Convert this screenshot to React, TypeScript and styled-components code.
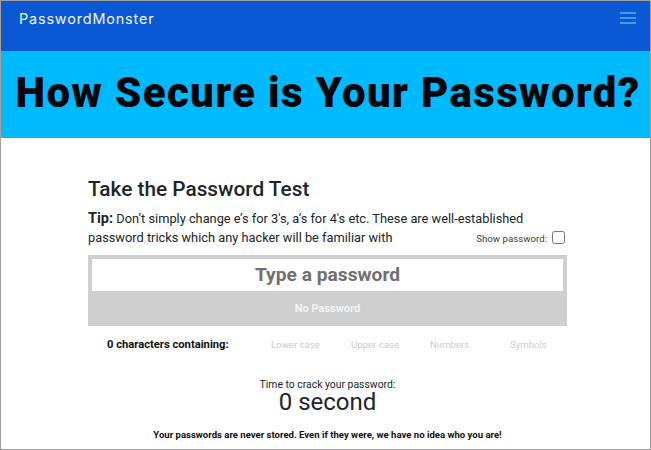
import React from "react";
import styled, { createGlobalStyle } from "styled-components";

const Global = createGlobalStyle`
  html, body { margin: 0; padding: 0; background: #fff; }
  * { box-sizing: border-box; }
  body { font-family: Roboto, "Liberation Sans", sans-serif; }
`;

const Frame = styled.div`
  width: 651px;
  height: 450px;
  border: 1px solid #a0a0a0;
  overflow: hidden;
  display: flex;
  flex-direction: column;
  background: #fff;
`;

const TopBar = styled.header`
  height: 50px;
  flex: none;
  background: #0a58d3;
  display: flex;
  justify-content: space-between;
  align-items: flex-start;
  padding: 9px 14px 0 18px;
`;

const Logo = styled.div`
  font-family: Inter, Roboto, sans-serif;
  font-size: 14.4px;
  font-weight: 400;
  line-height: 18px;
  letter-spacing: 0.85px;
  color: #f2f6ff;
`;

const Burger = styled.div`
  margin-top: 2px;
  width: 16px;
  height: 12px;
  display: flex;
  flex-direction: column;
  justify-content: space-between;
`;

const BurgerLine = styled.span`
  display: block;
  height: 2px;
  background: #3f9bf8;
`;

const Hero = styled.section`
  height: 87px;
  flex: none;
  background: #00baff;
  display: flex;
  align-items: center;
  justify-content: center;
  padding: 0 0 4px 5px;
`;

const HeroTitle = styled.h1`
  margin: 0;
  font-family: Roboto, sans-serif;
  font-size: 42px;
  line-height: 50px;
  font-weight: 900;
  letter-spacing: 1.35px;
  color: #04060a;
  white-space: nowrap;
`;

const Content = styled.main`
  flex: 1;
  width: 479px;
  margin-left: 87px;
  display: flex;
  flex-direction: column;
  padding-top: 38px;
`;

const Heading = styled.h2`
  margin: 0;
  font-size: 20.8px;
  line-height: 26px;
  font-weight: 500;
  color: #212529;
`;

const TipRow = styled.div`
  position: relative;
  margin-top: 7px;
  font-size: 12.8px;
  line-height: 19px;
  color: #212529;
  height: 38px;
`;

const TipLabel = styled.strong`
  font-weight: 700;
  font-size: 14.5px;
`;

const ShowPassword = styled.label`
  position: absolute;
  right: 2px;
  bottom: 0;
  display: flex;
  align-items: center;
  gap: 5px;
  font-size: 9.7px;
  line-height: 14px;
  color: #3c4043;
`;

const Check = styled.span`
  width: 13px;
  height: 13px;
  margin-bottom: 3px;
  border: 1px solid #767676;
  border-radius: 2.5px;
  background: #fff;
`;

const Meter = styled.div`
  margin-top: 8px;
  background: #cfcfcf;
  padding: 4px;
  height: 71px;
`;

const PasswordField = styled.div`
  height: 32px;
  background: #fff;
  text-align: center;
  font-size: 19.2px;
  line-height: 32px;
  font-weight: 700;
  color: #6f6f6f;
`;

const Strength = styled.div`
  height: 35px;
  text-align: center;
  font-size: 11px;
  line-height: 36px;
  font-weight: 700;
  color: #f4f4f4;
`;

const Counts = styled.div`
  display: grid;
  grid-template-columns: 183px 80px 79px 80px 57px;
  margin-top: 11px;
  height: 16px;
  align-items: center;
`;

const CountLabel = styled.div`
  padding-left: 19px;
  font-size: 11.2px;
  line-height: 16px;
  font-weight: 700;
  color: #111;
  white-space: nowrap;
`;

const CountItem = styled.div`
  font-size: 9.6px;
  line-height: 16px;
  color: #cdcdcd;
  white-space: nowrap;
`;

const Crack = styled.div`
  margin-top: 25px;
  text-align: center;
  color: #212529;
`;

const CrackLabel = styled.div`
  font-size: 10.4px;
  line-height: 14px;
`;

const CrackValue = styled.div`
  font-size: 24px;
  line-height: 21px;
`;

const Note = styled.p`
  margin: 15px 0 0;
  text-align: center;
  font-size: 9.56px;
  line-height: 14px;
  font-weight: 700;
  color: #111;
`;

export default function App() {
  return (
    <>
      <Global />
      <Frame>
        <TopBar>
          <Logo>PasswordMonster</Logo>
          <Burger>
            <BurgerLine />
            <BurgerLine />
            <BurgerLine />
          </Burger>
        </TopBar>
        <Hero>
          <HeroTitle>How Secure is Your Password?</HeroTitle>
        </Hero>
        <Content>
          <Heading>Take the Password Test</Heading>
          <TipRow>
            <TipLabel>Tip:</TipLabel> Don’t simply change e’s for 3's, a’s for 4's etc. These are well-established
            <br />
            password tricks which any hacker will be familiar with
            <ShowPassword>
              Show password:
              <Check />
            </ShowPassword>
          </TipRow>
          <Meter>
            <PasswordField>Type a password</PasswordField>
            <Strength>No Password</Strength>
          </Meter>
          <Counts>
            <CountLabel>0 characters containing:</CountLabel>
            <CountItem>Lower case</CountItem>
            <CountItem>Upper case</CountItem>
            <CountItem>Numbers</CountItem>
            <CountItem>Symbols</CountItem>
          </Counts>
          <Crack>
            <CrackLabel>Time to crack your password:</CrackLabel>
            <CrackValue>0 second</CrackValue>
          </Crack>
          <Note>Your passwords are never stored. Even if they were, we have no idea who you are!</Note>
        </Content>
      </Frame>
    </>
  );
}
